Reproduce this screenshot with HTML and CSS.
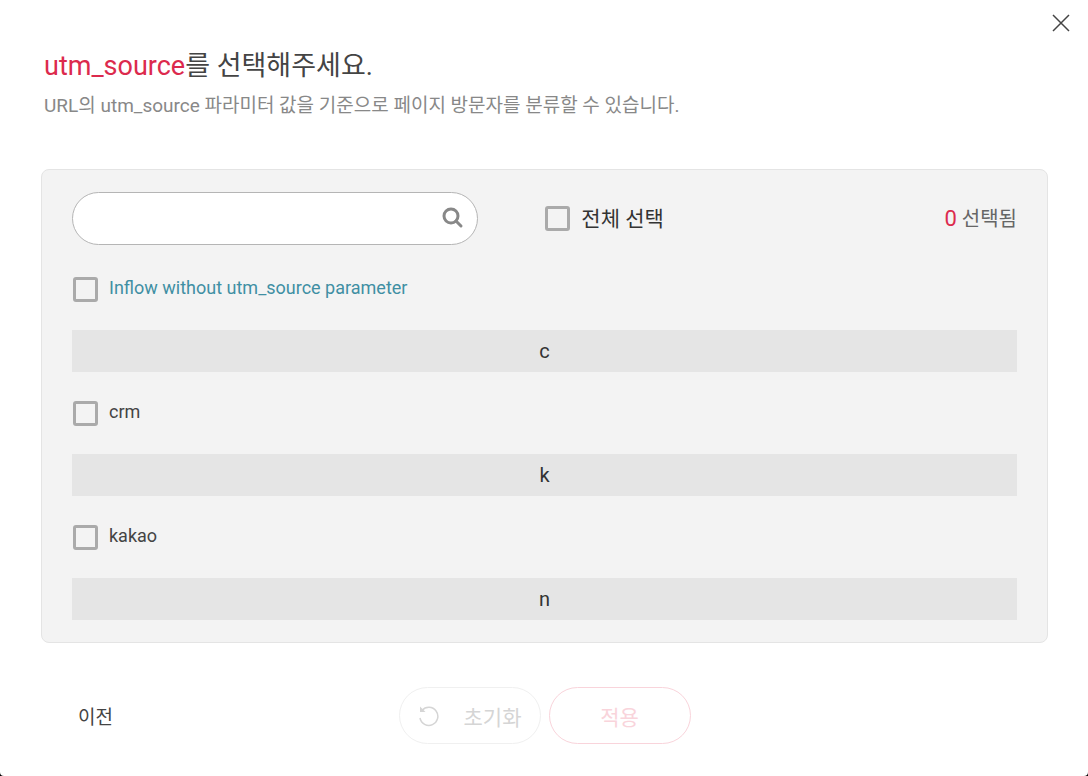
FILE: index.html
```
<!DOCTYPE html>
<html lang="ko">
    <head>
        <meta charset="UTF-8">
        <meta name="viewport" content="width=device-width, initial-scale=1">
        <title>utm_source 선택</title>
        <link rel="stylesheet" href="styles.css">
    </head>
    <body>
        <div class="modal">
            <button type="button" class="btn_close" aria-label="닫기">
                <svg width="18" height="18" viewBox="0 0 18 18"><path d="M1 1L17 17M17 1L1 17"/></svg>
            </button>
            <header class="tit">
                <h1><em>utm_source</em>를 선택해주세요.</h1>
                <p>URL의 utm_source 파라미터 값을 기준으로 페이지 방문자를 분류할 수 있습니다.</p>
            </header>

            <main class="panel">
                <div class="top">
                    <div class="search">
                        <input type="text" aria-label="검색">
                        <button type="button" aria-label="검색하기">
                            <svg width="22" height="22" viewBox="0 0 22 22"><circle cx="9" cy="9" r="7"/><path d="M14 14L19 19"/></svg>
                        </button>
                    </div>
                    <label class="chk all"><input type="checkbox"><span>전체 선택</span></label>
                    <p class="count"><em>0</em> 선택됨</p>
                </div>
                <label class="chk item none"><input type="checkbox"><span>Inflow without utm_source parameter</span></label>
                <h2>c</h2>
                <label class="chk item"><input type="checkbox"><span>crm</span></label>
                <h2>k</h2>
                <label class="chk item"><input type="checkbox"><span>kakao</span></label>
                <h2>n</h2>
            </main>

            <footer class="foot">
                <button type="button" class="btn_prev">이전</button>
                <div class="btns">
                    <button type="button" class="btn reset" disabled>
                        <svg width="22" height="22" viewBox="0 0 22 22"><path class="line" d="M4 5.5A9 9 0 1 1 2 13"/><path class="head" d="M2 1.5V7H7.5Z"/></svg>
                        초기화
                    </button>
                    <button type="button" class="btn apply" disabled>적용</button>
                </div>
            </footer>
        </div>
    </body>
</html>
```
FILE: styles.css
```
*{
    box-sizing: border-box;
}
body{
    margin: 0;
    background: #000;
    font-family: Roboto, "Noto Sans CJK KR", sans-serif;
    color: #444;
}
h1, h2, p{
    margin: 0;
    font-weight: 400;
}
em{
    font-style: normal;
    color: #dc2a4d;
}
button{
    padding: 0;
    border: 0;
    background: none;
    font-family: inherit;
    color: inherit;
}
svg{
    display: block;
    fill: none;
    stroke: currentColor;
}

/* 모달 박스 */
.modal{
    position: relative;
    min-height: 100vh;
    padding: 46px 40px 31px 41px;
    border-radius: 0 0 4px 4px;
    background: #fff;
}
/* 닫기 버튼 */
.btn_close{
    position: absolute;
    top: 14px;
    right: 18px;
}
.btn_close svg{
    stroke-width: 1.5;
}

/* 제목 */
.tit{
    padding: 0 3px;
    margin-bottom: 44px;
}
.tit h1{
    font-size: 27px;
    line-height: 40px;
}
.tit p{
    font-size: 19px;
    line-height: 39px;
    color: #888;
}

/* 선택 영역 */
.panel{
    padding: 22px 30px;
    border: 1px solid #e4e4e4;
    border-radius: 8px;
    background: #f3f3f3;
}
.panel h2{
    font-size: 20px;
    line-height: 42px;
    text-align: center;
    color: #333;
    background: #e5e5e5;
}
.top{
    display: flex;
    align-items: center;
    margin-bottom: 3px;
}
/* 검색창 */
.search{
    display: flex;
    align-items: center;
    width: 43%;
    height: 53px;
    margin-right: 67px;
    padding: 0 13px 2px 24px;
    border: 1px solid #b5b5b5;
    border-radius: 27px;
    background: #fff;
}
.search input{
    flex: 1;
    min-width: 0;
    border: 0;
    outline: 0;
    background: none;
    font-family: inherit;
    font-size: 18px;
}
.search svg{
    color: #888;
    stroke-width: 3;
    stroke-linecap: round;
}
/* 체크박스 */
.chk{
    display: flex;
    align-items: center;
    gap: 11px;
}
.chk input{
    appearance: none;
    width: 25px;
    height: 25px;
    margin: 0;
    border: 3px solid #aaa;
    border-radius: 3px;
}
.chk span{
    padding-bottom: 3px;
}
.all{
    font-size: 21px;
    color: #333;
}
.item{
    height: 82px;
    padding-left: 1px;
    font-size: 18px;
}
.none{
    color: #3f8fa3;
}
.count{
    margin-left: auto;
    padding-bottom: 2px;
    font-size: 20px;
    color: #666;
}
.count em{
    font-size: 22px;
}

/* 하단 버튼 */
.foot{
    display: grid;
    grid-template-columns: 1fr auto 1fr;
    align-items: center;
    padding: 0 37px;
    margin-top: 44px;
}
.btn_prev{
    justify-self: start;
    font-size: 19px;
}
.btns{
    display: flex;
    gap: 8px;
}
.btn{
    display: flex;
    align-items: center;
    justify-content: center;
    width: 142px;
    height: 57px;
    border: 1px solid;
    border-radius: 29px;
    font-size: 21px;
}
.reset{
    gap: 24px;
    border-color: #f0f0f0;
    color: #d5d5d5;
}
.reset .line{
    stroke-width: 1.5;
}
.reset .head{
    fill: currentColor;
    stroke: none;
}
.apply{
    border-color: #f9d4db;
    color: #f9d4db;
}
```
